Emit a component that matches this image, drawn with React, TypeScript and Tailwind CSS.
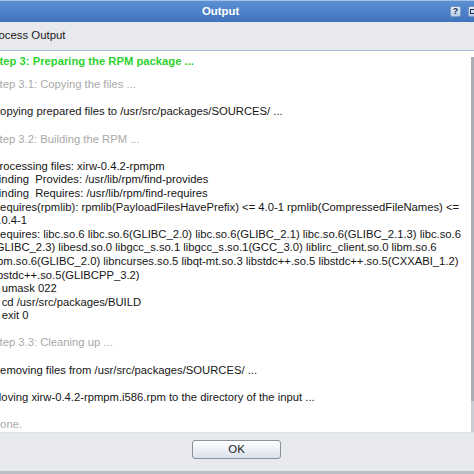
const LINES: { text: string; tone: 'green' | 'gray' | 'black'; gap?: boolean }[] = [
  { text: 'Step 3: Preparing the RPM package ...', tone: 'green' },
  { text: 'Step 3.1: Copying the files ...', tone: 'gray', gap: true },
  { text: 'Copying prepared files to /usr/src/packages/SOURCES/ ...', tone: 'black', gap: true },
  { text: 'Step 3.2: Building the RPM ...', tone: 'gray', gap: true },
  { text: 'Processing files: xirw-0.4.2-rpmpm', tone: 'black', gap: true },
  { text: 'Finding  Provides: /usr/lib/rpm/find-provides', tone: 'black' },
  { text: 'Finding  Requires: /usr/lib/rpm/find-requires', tone: 'black' },
  { text: 'Requires(rpmlib): rpmlib(PayloadFilesHavePrefix) <= 4.0-1 rpmlib(CompressedFileNames) <=', tone: 'black' },
  { text: '3.0.4-1', tone: 'black' },
  { text: 'Requires: libc.so.6 libc.so.6(GLIBC_2.0) libc.so.6(GLIBC_2.1) libc.so.6(GLIBC_2.1.3) libc.so.6', tone: 'black' },
  { text: '(GLIBC_2.3) libesd.so.0 libgcc_s.so.1 libgcc_s.so.1(GCC_3.0) liblirc_client.so.0 libm.so.6', tone: 'black' },
  { text: 'libm.so.6(GLIBC_2.0) libncurses.so.5 libqt-mt.so.3 libstdc++.so.5 libstdc++.so.5(CXXABI_1.2)', tone: 'black' },
  { text: 'libstdc++.so.5(GLIBCPP_3.2)', tone: 'black' },
  { text: '+ umask 022', tone: 'black' },
  { text: '+ cd /usr/src/packages/BUILD', tone: 'black' },
  { text: '+ exit 0', tone: 'black' },
  { text: 'Step 3.3: Cleaning up ...', tone: 'gray', gap: true },
  { text: 'Removing files from /usr/src/packages/SOURCES/ ...', tone: 'black', gap: true },
  { text: 'Moving xirw-0.4.2-rpmpm.i586.rpm to the directory of the input ...', tone: 'black', gap: true },
  { text: 'Done.', tone: 'gray', gap: true },
];

function toneClass(tone: 'green' | 'gray' | 'black') {
  if (tone === 'green') return 'text-[#2ed22e] font-bold';
  if (tone === 'gray') return 'text-[#a9a9a9]';
  return 'text-[#151515]';
}

export default function App() {
  return (
    <div className="w-[474px] h-[474px] overflow-hidden flex flex-col bg-[#e8e9ed] font-['Liberation_Sans',Arial,sans-serif] text-[11.25px]">
      {/* title bar */}
      <div className="h-[22px] shrink-0 flex items-center border-t border-[#a4c1e6] bg-gradient-to-b from-[#5b90d3] to-[#3f74bd]">
        <span className="pl-[202px] text-white font-bold text-[11.4px] leading-none">Output</span>
        <div className="flex-1" />
        <div className="flex items-center gap-[7px] mr-[-5px]">
          <div className="w-[11px] h-[11px] rounded-[2px] border border-[#7f9cc4] bg-gradient-to-b from-[#e3ecf8] to-[#b9cce6] flex items-center justify-center text-[9px] font-bold text-[#1c2f55] leading-none">
            ?
          </div>
          <div className="w-[11px] h-[11px] rounded-[2px] border border-[#7f9cc4] bg-gradient-to-b from-[#e3ecf8] to-[#b9cce6] flex items-center justify-center">
            <div className="w-[7px] h-[5px] border border-[#1c2f55]" />
          </div>
        </div>
      </div>

      {/* group label */}
      <div className="h-[28px] shrink-0 flex items-center">
        <span className="ml-[-13px] text-[11.4px] text-[#1a1a1a] whitespace-pre">Process Output</span>
      </div>

      {/* output text area */}
      <div className="h-[382px] shrink-0 flex border-t border-[#a9bcd9] bg-white">
        <div className="flex-1 overflow-hidden pt-[4px]">
          {LINES.map((l, i) => (
            <div
              key={i}
              className={`ml-[-8px] whitespace-pre leading-[13.6px] ${toneClass(l.tone)} ${l.gap ? (i === 1 ? 'mt-[9.6px]' : 'mt-[13.6px]') : ''}`}
            >
              {l.text}
            </div>
          ))}
        </div>
        <div className="w-[3px] flex flex-col pt-[6px]">
          <div className="h-[344px] bg-[#a8adb6]" />
          <div className="flex-1 bg-[#c9cdd4]" />
        </div>
      </div>

      {/* buttons */}
      <div className="flex-1 flex flex-col border-t border-[#dde4ef]">
        <div className="pt-[7px] pl-[192px]">
          <button className="w-[89px] h-[19px] rounded-[3px] border border-[#8b9099] bg-gradient-to-b from-[#ffffff] to-[#d9e1ec] text-[11.4px] text-[#1a1a1a] leading-none flex items-center justify-center">
            OK
          </button>
        </div>
        <div className="flex-1" />
        <div className="h-[3px] bg-[#b8bdc6]" />
      </div>
    </div>
  );
}
